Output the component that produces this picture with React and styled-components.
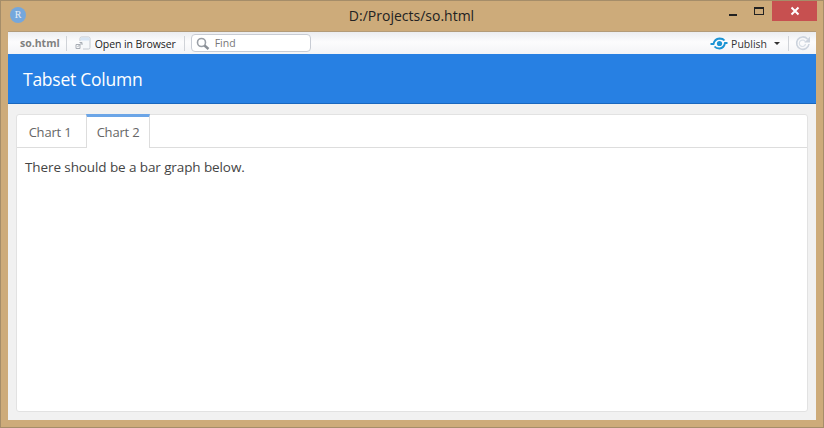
import React from "react";
import styled, { createGlobalStyle } from "styled-components";

const Global = createGlobalStyle`
  html, body { margin: 0; padding: 0; background: #cdab7a; }
  body { font-family: "Open Sans", "Liberation Sans", sans-serif; }
`;

const Win = styled.div`
  width: 824px; height: 428px; box-sizing: border-box;
  border: 1px solid #a58d69; background: #cdab7a;
  display: flex; flex-direction: column;
  padding: 0 7px 7px;
`;
const TitleBar = styled.div`
  height: 30px; flex: none; position: relative;
  display: flex; align-items: center; justify-content: center;
`;
const Title = styled.div`
  font: 14px/1 "Open Sans", sans-serif; color: #222; margin-top: -1px; margin-left: -1px;
`;
const RBadge = styled.div`
  position: absolute; left: 2px; top: 6px; width: 16px; height: 16px; border-radius: 50%;
  background: #75a7dc; color: #e8eef4; font: 10px/16px "Liberation Serif", serif; text-align: center;
`;
const WinButtons = styled.div`
  position: absolute; right: -1px; top: 0; display: flex; align-items: flex-start;
`;
const WinBtn = styled.div`
  width: ${p => p.$w}px; height: 20px; display: flex; align-items: center; justify-content: center;
  background: ${p => p.$close ? "#c75050" : "transparent"};
`;
const Content = styled.div`
  flex: 1; display: flex; flex-direction: column; background: #f1f1f1;
  border-top: 1px solid #b39b78; min-height: 0;
`;
const Toolbar = styled.div`
  height: 22px; flex: none; display: flex; align-items: center;
  background: linear-gradient(#ebedf0, #fcfcfd 45%, #f3f4f6);
  padding: 0 5px 0 12px;
`;
const FileName = styled.span`
  font: bold 10.5px "Open Sans", sans-serif; color: #808080; margin-right: 6px;
`;
const Sep = styled.div`
  width: 1px; height: 15px; background: #d0d3d8; margin-right: ${p => p.$m}px;
`;
const OpenLabel = styled.span`
  font: 10.5px "Open Sans", sans-serif; color: #222; margin: 1px 8px 0 4px; letter-spacing: -0.08px;
`;
const Find = styled.div`
  width: 120px; height: 18px; box-sizing: border-box; border: 1px solid #c8ccd4; border-radius: 4px;
  background: #fff; display: flex; align-items: center; gap: 5px; padding-left: 4px;
  font: 10.5px "Open Sans", sans-serif; color: #777; margin-left: 6px;
`;
const Spacer = styled.div` flex: 1; `;
const PublishLabel = styled.span`
  font: 10.5px "Open Sans", sans-serif; color: #333; margin: 1px 7px 0 3px;
`;
const Caret = styled.div`
  width: 0; height: 0; border-left: 3px solid transparent; border-right: 3px solid transparent;
  border-top: 3px solid #333; margin-right: 8px;
`;
const Header = styled.header`
  height: 50px; flex: none; box-sizing: border-box; background: #2780e3;
  border-bottom: 1px solid #1967be;
  display: flex; align-items: center; padding: 1px 0 0 15px;
  color: #fff; font: 17.5px "Open Sans", sans-serif; letter-spacing: -0.25px;
`;
const Body = styled.main`
  flex: 1; padding: 10px 8px 8px; display: flex; min-height: 0;
`;
const Card = styled.section`
  flex: 1; box-sizing: border-box; background: #fff; border: 1px solid #e2e2e2; border-radius: 3px;
  display: flex; flex-direction: column;
`;
const Tabs = styled.div`
  height: 33px; flex: none; display: flex; border-bottom: 1px solid #ddd; box-sizing: border-box;
`;
const Tab = styled.div`
  box-sizing: border-box; width: ${p => p.$active ? 64 : 69}px; height: 32px;
  padding-right: ${p => p.$active ? 0 : 3}px;
  text-align: center; font: 13px/35px "Open Sans", sans-serif; color: #666; letter-spacing: -0.2px;
  ${p => p.$active && `
    background: #fff; border-top: 3px solid #6ba5e7; border-left: 1px solid #ddd; border-right: 1px solid #ddd;
    line-height: 30px; margin-top: -1px; height: 34px;
  `}
`;
const Text = styled.p`
  margin: 10px 0 0 8px; font: 13.5px/18px "Open Sans", sans-serif; color: #444; letter-spacing: -0.1px;
`;

export default function App() {
  return (
    <Win>
      <Global />
      <TitleBar>
        <RBadge>R</RBadge>
        <Title>D:/Projects/so.html</Title>
        <WinButtons>
          <WinBtn $w={27}>
            <svg width="10" height="10"><rect x="1" y="8" width="8" height="2" fill="#222" /></svg>
          </WinBtn>
          <WinBtn $w={26}>
            <svg width="11" height="10"><rect x="0.5" y="1.5" width="9" height="7" fill="none" stroke="#222" strokeWidth="1" /><rect x="0.5" y="1" width="9" height="2" fill="#222" /></svg>
          </WinBtn>
          <WinBtn $w={45} $close>
            <svg width="10" height="10"><path d="M1.5 1.5L8.5 8.5M8.5 1.5L1.5 8.5" stroke="#fff" strokeWidth="2" /></svg>
          </WinBtn>
        </WinButtons>
      </TitleBar>
      <Content>
        <Toolbar>
          <FileName>so.html</FileName>
          <Sep $m={8} />
          <svg width="16" height="14" viewBox="0 0 16 14">
            <path d="M5 5V2.5A1.5 1.5 0 0 1 6.5 1h7A1.5 1.5 0 0 1 15 2.5v9a1.5 1.5 0 0 1-1.5 1.5H8" fill="#f6f8fa" stroke="#c4c9d0" />
            <rect x="5.5" y="1.5" width="9" height="3" fill="#d6e4f3" />
            <path d="M1 8.5h4v4H1zM2.5 11l4-4M4.5 6.5h2.5V9" fill="none" stroke="#a8adb4" />
          </svg>
          <OpenLabel>Open in Browser</OpenLabel>
          <Sep $m={0} />
          <Find>
            <svg width="14" height="13" viewBox="0 0 14 13">
              <circle cx="5.5" cy="5.5" r="4" fill="none" stroke="#9a9fa6" strokeWidth="1.6" />
              <path d="M8.5 8.5L12.5 12" stroke="#8a8f96" strokeWidth="2.4" />
            </svg>
            Find
          </Find>
          <Spacer />
          <svg width="18" height="13" viewBox="0 0 18 13">
            <circle cx="9.5" cy="6.5" r="2.6" fill="#1c94d4" />
            <path d="M0.5 7H3.5Q4.5 2 9.5 1.5Q13 1.5 14.5 3.5M17.5 6H15Q14 11 9.5 11.5Q6 11.5 4.5 9.5" fill="none" stroke="#1c94d4" strokeWidth="1.9" />
          </svg>
          <PublishLabel>Publish</PublishLabel>
          <Caret />
          <Sep $m={6} />
          <svg width="16" height="16" viewBox="0 0 16 16">
            <path d="M12.5 4A6.2 6.2 0 1 0 14 9" fill="none" stroke="#ccd3dd" strokeWidth="1.6" />
            <path d="M10.5 7.2A3.2 3.2 0 1 0 10.6 9" fill="none" stroke="#d9dfe7" strokeWidth="1.2" />
            <path d="M9.5 7.5L15 1.5V7.5z" fill="#ccd3dd" />
          </svg>
        </Toolbar>
        <Header>Tabset Column</Header>
        <Body>
          <Card>
            <Tabs>
              <Tab>Chart 1</Tab>
              <Tab $active>Chart 2</Tab>
            </Tabs>
            <Text>There should be a bar graph below.</Text>
          </Card>
        </Body>
      </Content>
    </Win>
  );
}
